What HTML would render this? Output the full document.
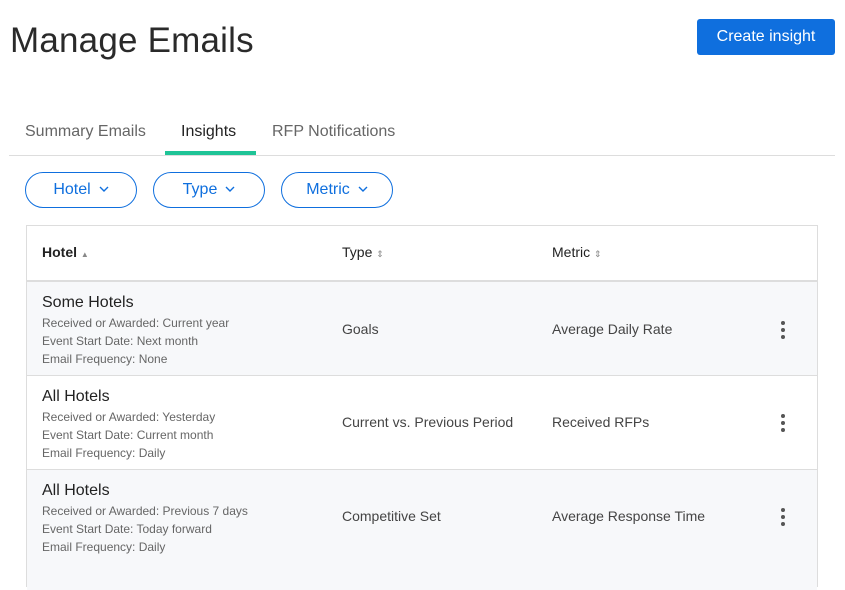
<!DOCTYPE html>
<html><head><style>
body{margin:0;width:845px;height:559px;overflow:hidden;background:#fff;font-family:"Liberation Sans",sans-serif;color:#222;position:relative}
.a{position:absolute}
h1{position:absolute;left:10px;top:21px;margin:0;font-weight:400;font-size:35px;color:#2a2a2a;letter-spacing:0.2px}
.btn{left:697px;top:19px;width:138px;height:36px;background:#0f6fde;color:#fff;border-radius:3px;font-size:16px;text-align:center;line-height:36px}
.tab{top:123px;font-size:16px;color:#666}
.pill{top:172px;height:34px;width:110px;border:1px solid #0f6fde;border-radius:18px;color:#0f6fde;font-size:16px;text-align:center;line-height:34px}
.pill svg{margin-left:8px;vertical-align:2px}
.tbl{left:26px;top:225px;width:790px;height:360px;border:1px solid #ddd}
.row{position:absolute;left:0;width:790px;height:94px;border-top:1px solid #ddd}
.t{position:absolute;font-size:14px;color:#444}
.n{position:absolute;left:15px;top:12px;font-size:16px;color:#222}
.s{position:absolute;left:15px;font-size:12px;color:#666}
.dots{position:absolute;left:754px;top:39px;width:4px}
.dots i{display:block;width:4px;height:4px;border-radius:2px;background:#555;margin-bottom:3px}
</style></head><body>
<h1>Manage Emails</h1>
<div class="a btn">Create insight</div>
<div class="a tab" style="left:25px">Summary Emails</div>
<div class="a tab" style="left:181px;color:#222">Insights</div>
<div class="a tab" style="left:272px">RFP Notifications</div>
<div class="a" style="left:9px;top:155px;width:826px;height:1px;background:#ddd"></div>
<div class="a" style="left:165px;top:151px;width:91px;height:4px;background:#1fc497"></div>
<div class="a pill" style="left:25px">Hotel<svg width="10" height="6"><path d="M1 1l4 4 4-4" fill="none" stroke="#0f6fde" stroke-width="1.4"/></svg></div>
<div class="a pill" style="left:153px">Type<svg width="10" height="6"><path d="M1 1l4 4 4-4" fill="none" stroke="#0f6fde" stroke-width="1.4"/></svg></div>
<div class="a pill" style="left:281px">Metric<svg width="10" height="6"><path d="M1 1l4 4 4-4" fill="none" stroke="#0f6fde" stroke-width="1.4"/></svg></div>
<div class="a tbl">
<div class="t" style="left:15px;top:18px;font-weight:700;color:#222">Hotel <span style="font-size:8px;color:#888">▲</span></div>
<div class="t" style="left:315px;top:18px;color:#222">Type <span style="font-size:9px;color:#888">⇕</span></div>
<div class="t" style="left:525px;top:18px;color:#222">Metric <span style="font-size:9px;color:#888">⇕</span></div>
<div class="row" style="top:54px;border-top:2px solid #ddd;background:#f7f8fa">
<div class="n">Some Hotels</div><div class="s" style="top:34px">Received or Awarded: Current year</div><div class="s" style="top:52px">Event Start Date: Next month</div><div class="s" style="top:70px">Email Frequency: None</div>
<div class="t" style="left:315px;top:39px">Goals</div><div class="t" style="left:525px;top:39px">Average Daily Rate</div>
<div class="dots"><i></i><i></i><i></i></div></div>
<div class="row" style="top:149px;background:#fff">
<div class="n">All Hotels</div><div class="s" style="top:34px">Received or Awarded: Yesterday</div><div class="s" style="top:52px">Event Start Date: Current month</div><div class="s" style="top:70px">Email Frequency: Daily</div>
<div class="t" style="left:315px;top:38px">Current vs. Previous Period</div><div class="t" style="left:525px;top:38px">Received RFPs</div>
<div class="dots" style="top:38px"><i></i><i></i><i></i></div></div>
<div class="row" style="top:243px;height:120px;background:#f7f8fa">
<div class="n">All Hotels</div><div class="s" style="top:34px">Received or Awarded: Previous 7 days</div><div class="s" style="top:52px">Event Start Date: Today forward</div><div class="s" style="top:70px">Email Frequency: Daily</div>
<div class="t" style="left:315px;top:38px">Competitive Set</div><div class="t" style="left:525px;top:38px">Average Response Time</div>
<div class="dots" style="top:38px"><i></i><i></i><i></i></div></div>
</div>
</body></html>
